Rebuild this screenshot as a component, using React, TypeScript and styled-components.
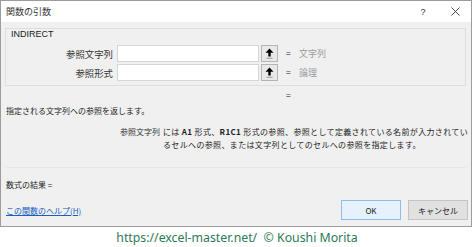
import styled, { createGlobalStyle } from 'styled-components';

const GlobalStyle = createGlobalStyle`
  html, body {
    margin: 0;
    padding: 0;
    background: #ffffff;
  }
  body {
    font-family: "Noto Sans CJK JP", "Noto Sans", sans-serif;
  }
`;

const Window = styled.div`
  width: 470px;
  border: 1px solid #9c9c9c;
  background: #f0f0f0;
  padding-bottom: 6px;
  color: #1e1e1e;
  font-size: 8px;
`;

const TitleBar = styled.div`
  height: 21px;
  background: #ffffff;
  display: flex;
  align-items: center;
  padding: 0 0 0 5px;
`;

const Title = styled.div`
  flex: 1;
  font-size: 9px;
  color: #333;
`;

const TitleButton = styled.div`
  width: 32px;
  height: 21px;
  display: flex;
  align-items: center;
  justify-content: center;
  font-family: "Liberation Sans", sans-serif;
  font-size: 9px;
  color: #333;
`;

const Group = styled.div`
  margin: 6px 5px 0 4px;
  border: 1px solid #dedede;
  padding: 0 0 4px 0;
`;

const Caption = styled.div`
  height: 10px;
  line-height: 10px;
  padding-left: 5px;
  font-family: "Liberation Sans", sans-serif;
  font-size: 9px;
  color: #222;
`;

const Rows = styled.div`
  margin-top: 6px;
  display: flex;
  flex-direction: column;
  gap: 2px;
`;

const Row = styled.div`
  display: flex;
  align-items: center;
  height: 17px;
`;

const Label = styled.div`
  width: 107px;
  text-align: right;
  margin-right: 4px;
  font-size: 9.4px;
  color: #333;
`;

const Input = styled.div`
  width: 140px;
  height: 15px;
  background: #ffffff;
  border: 1px solid #d6d6d6;
`;

const RefButton = styled.div`
  width: 15px;
  height: 15px;
  margin-left: 2px;
  background: #e8e8e8;
  border: 1px solid #b4b4b4;
  display: flex;
  align-items: center;
  justify-content: center;
`;

const Eq = styled.div`
  width: 13px;
  margin-left: 8px;
  font-family: "Liberation Sans", sans-serif;
  font-size: 8px;
  font-weight: bold;
  color: #777;
`;

const Value = styled.div`
  font-size: 9px;
  color: #9a9a9a;
`;

const LoneEq = styled.div`
  margin-top: 5px;
  height: 10px;
  line-height: 10px;
  padding-left: 285px;
  font-family: "Liberation Sans", sans-serif;
  font-size: 8px;
  font-weight: bold;
  color: #777;
`;

const Text = styled.div<{ $top: number }>`
  margin-top: ${(p) => p.$top}px;
  height: 10px;
  line-height: 10px;
  padding-left: 5px;
  white-space: nowrap;
`;

const ArgHelp = styled.div`
  margin-top: 9px;
  display: grid;
  grid-template-columns: 43px auto;
  padding-left: 119px;
  line-height: 13px;
  white-space: nowrap;
`;

const ArgName = styled.div`
  color: #333;
`;

const ArgText = styled.div`
  letter-spacing: 0.35px;
`;

const Separator = styled.div`
  margin: 16px 5px 0 5px;
  height: 1px;
  background: #e6e6e6;
`;

const Footer = styled.div`
  margin-top: 10px;
  height: 20px;
  display: flex;
  align-items: center;
  padding: 0 3px 0 5px;
`;

const HelpLink = styled.a`
  flex: 1;
  color: #1a5fc0;
  text-decoration: underline;
`;

const Button = styled.div<{ $primary?: boolean }>`
  width: 58px;
  height: 18px;
  margin-left: 7px;
  display: flex;
  align-items: center;
  justify-content: center;
  background: ${(p) => (p.$primary ? '#e5f1fb' : '#e1e1e1')};
  border: 1px solid ${(p) => (p.$primary ? '#8ebde8' : '#c4c4c4')};
  font-size: 8px;
  color: #222;
`;

const Watermark = styled.div`
  text-align: center;
  margin-top: 3px;
  font-family: "Noto Sans", "Noto Sans CJK JP", sans-serif;
  font-size: 12.3px;
  line-height: 16px;
  color: #2c7a58;
`;

function UpArrow() {
  return (
    <svg width="9" height="11" viewBox="0 0 9 11">
      <path d="M4.5 0.5 L8.5 4.8 L5.7 4.8 L5.7 8.6 L3.3 8.6 L3.3 4.8 L0.5 4.8 Z" fill="#000" />
      <rect x="1.5" y="9.8" width="6" height="1" fill="#9a9a9a" />
    </svg>
  );
}

function CloseIcon() {
  return (
    <svg width="9" height="9" viewBox="0 0 9 9">
      <path d="M0.5 0.5 L8.5 8.5 M8.5 0.5 L0.5 8.5" stroke="#333" strokeWidth="0.9" />
    </svg>
  );
}

const args = [
  { label: '参照文字列', value: '文字列' },
  { label: '参照形式', value: '論理' },
];

function App() {
  return (
    <>
      <GlobalStyle />
      <Window>
        <TitleBar>
          <Title>関数の引数</Title>
          <TitleButton>?</TitleButton>
          <TitleButton>
            <CloseIcon />
          </TitleButton>
        </TitleBar>

        <Group>
          <Caption>INDIRECT</Caption>
          <Rows>
            {args.map((a) => (
              <Row key={a.label}>
                <Label>{a.label}</Label>
                <Input />
                <RefButton>
                  <UpArrow />
                </RefButton>
                <Eq>=</Eq>
                <Value>{a.value}</Value>
              </Row>
            ))}
          </Rows>
        </Group>

        <LoneEq>=</LoneEq>
        <Text $top={5}>指定される文字列への参照を返します。</Text>

        <ArgHelp>
          <ArgName>参照文字列</ArgName>
          <ArgText>
            には <b>A1</b> 形式、<b>R1C1</b> 形式の参照、参照として定義されている名前が入力されてい
            <br />
            るセルへの参照、または文字列としてのセルへの参照を指定します。
          </ArgText>
        </ArgHelp>

        <Separator />
        <Text $top={12}>数式の結果 =</Text>

        <Footer>
          <HelpLink>この関数のヘルプ(H)</HelpLink>
          <Button $primary>OK</Button>
          <Button>キャンセル</Button>
        </Footer>
      </Window>
      <Watermark>https://excel-master.net/&nbsp;&nbsp;© Koushi Morita</Watermark>
    </>
  );
}

export default App;
